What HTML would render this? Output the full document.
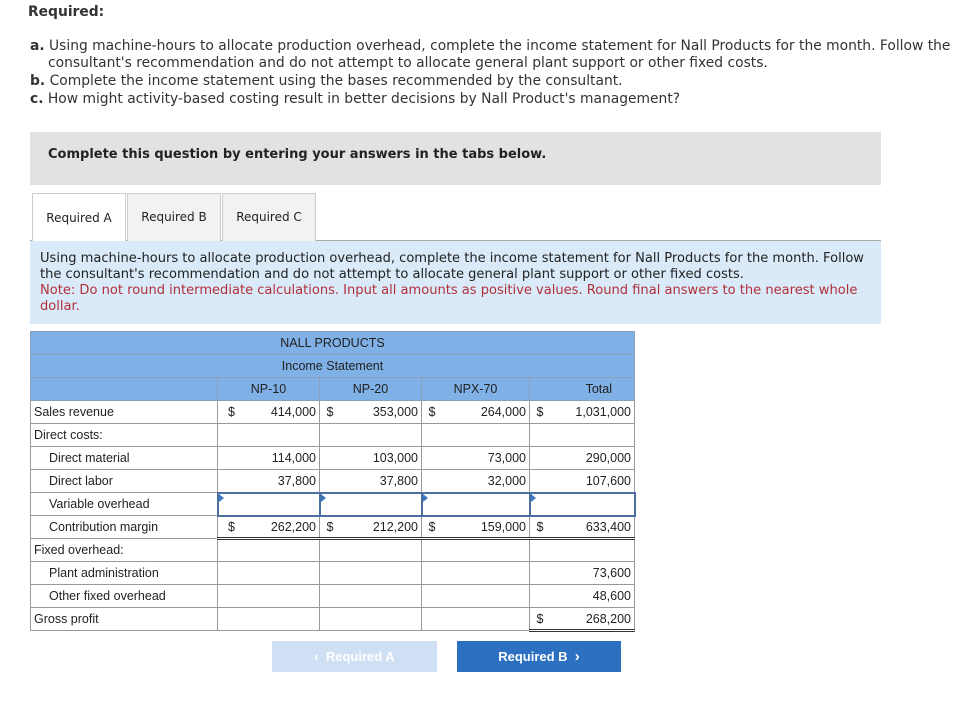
<!DOCTYPE html><html><head><style>
body{margin:0;width:970px;height:718px;background:#fff;font-family:"Liberation Sans",Arial,sans-serif;position:relative;overflow:hidden;color:#222}
.a{position:absolute;white-space:nowrap}
.t{font-family:"DejaVu Sans",sans-serif;font-size:13.85px;color:#333}
.v{font-family:"DejaVu Sans",Verdana,sans-serif;font-size:13px}
table{position:absolute;left:30px;top:331px;border-collapse:collapse;font-size:12.5px;font-family:"Liberation Sans",Arial,sans-serif}
td{border:1px solid #999;height:23px;padding:0 3px;box-sizing:border-box}
tr.h td{background:#7fb0e6;border-color:#8a9fb8;text-align:center;font-size:12.5px}
.l{width:187px}.c1{width:102px}.c2{width:102px}.c3{width:108px}.c4{width:105px}
.r{text-align:right}.d{float:left}
.in td.i{border:2px solid #4a6fa0;background:#fff;position:relative}
.in td.i:before{content:"";position:absolute;left:0;top:0;border-left:5px solid #3a78c0;border-top:4px solid transparent;border-bottom:4px solid transparent}
.dbl{border-bottom:3px double #333!important}
</style></head><body>
<div class="a t" style="left:28px;top:4px;font-weight:bold">Required:</div>
<div class="a t" style="left:30px;top:38px"><b>a.</b> Using machine-hours to allocate production overhead, complete the income statement for Nall Products for the month. Follow the</div>
<div class="a t" style="left:48px;top:55px">consultant's recommendation and do not attempt to allocate general plant support or other fixed costs.</div>
<div class="a t" style="left:30px;top:73px"><b>b.</b> Complete the income statement using the bases recommended by the consultant.</div>
<div class="a t" style="left:30px;top:91px"><b>c.</b> How might activity-based costing result in better decisions by Nall Product's management?</div>
<div class="a" style="left:30px;top:132px;width:851px;height:53px;background:#e2e2e2"></div>
<div class="a v" style="left:48px;top:147px;font-weight:bold;font-size:13px">Complete this question by entering your answers in the tabs below.</div>
<div class="a" style="left:30px;top:240px;width:851px;height:1px;background:#aaa"></div>
<div class="a v" style="left:32px;top:193px;width:92px;height:48px;border:1px solid #ccc;border-bottom:none;background:#fff;text-align:center;line-height:48px;font-size:12px">Required A</div>
<div class="a v" style="left:127px;top:193px;width:92px;height:47px;border:1px solid #ccc;border-bottom:none;background:#f2f2f2;text-align:center;line-height:47px;font-size:12px">Required B</div>
<div class="a v" style="left:222px;top:193px;width:92px;height:47px;border:1px solid #ccc;border-bottom:none;background:#f2f2f2;text-align:center;line-height:47px;font-size:12px">Required C</div>
<div class="a" style="left:30px;top:241px;width:851px;height:83px;background:#dbeaf8"></div>
<div class="a v" style="left:40px;top:251px;line-height:16px;color:#222;font-size:13.05px">Using machine-hours to allocate production overhead, complete the income statement for Nall Products for the month. Follow<br>the consultant's recommendation and do not attempt to allocate general plant support or other fixed costs.<br><span style="color:#b0303a">Note: Do not round intermediate calculations. Input all amounts as positive values. Round final answers to the nearest whole<br>dollar.</span></div>
<table>
<tr class="h"><td colspan="5" style="border-bottom:1px solid #8a9fb8">NALL PRODUCTS</td></tr>
<tr class="h"><td colspan="5">Income Statement</td></tr>
<tr class="h"><td class="l"></td><td class="c1">NP-10</td><td class="c2">NP-20</td><td class="c3">NPX-70</td><td class="c4" style="text-align:right;padding-right:22px">Total</td></tr>
<tr><td>Sales revenue</td><td class="r"><span class="d">&nbsp;&nbsp;$</span>414,000</td><td class="r"><span class="d">&nbsp;$</span>353,000</td><td class="r"><span class="d">&nbsp;$</span>264,000</td><td class="r"><span class="d">&nbsp;$</span>1,031,000</td></tr>
<tr><td>Direct costs:</td><td></td><td></td><td></td><td></td></tr>
<tr><td style="padding-left:18px">Direct material</td><td class="r">114,000</td><td class="r">103,000</td><td class="r">73,000</td><td class="r">290,000</td></tr>
<tr><td style="padding-left:18px">Direct labor</td><td class="r">37,800</td><td class="r">37,800</td><td class="r">32,000</td><td class="r">107,600</td></tr>
<tr class="in"><td style="padding-left:18px">Variable overhead</td><td class="i"></td><td class="i"></td><td class="i"></td><td class="i"></td></tr>
<tr><td style="padding-left:18px">Contribution margin</td><td class="r dbl"><span class="d">&nbsp;&nbsp;$</span>262,200</td><td class="r dbl"><span class="d">&nbsp;$</span>212,200</td><td class="r dbl"><span class="d">&nbsp;$</span>159,000</td><td class="r dbl"><span class="d">&nbsp;$</span>633,400</td></tr>
<tr><td>Fixed overhead:</td><td></td><td></td><td></td><td></td></tr>
<tr><td style="padding-left:18px">Plant administration</td><td></td><td></td><td></td><td class="r">73,600</td></tr>
<tr><td style="padding-left:18px">Other fixed overhead</td><td></td><td></td><td></td><td class="r">48,600</td></tr>
<tr><td>Gross profit</td><td></td><td></td><td></td><td class="r dbl"><span class="d">&nbsp;$</span>268,200</td></tr>
</table>
<div class="a" style="left:272px;top:641px;width:165px;height:31px;background:#cfe0f5;color:#fff;font-weight:bold;font-size:13px;text-align:center;line-height:31px">&lsaquo;&nbsp; Required A</div>
<div class="a" style="left:457px;top:641px;width:164px;height:31px;background:#2d6fc0;color:#fff;font-weight:bold;font-size:13px;text-align:center;line-height:31px">Required B &nbsp;<span style="font-size:15px">&rsaquo;</span></div>
</body></html>
